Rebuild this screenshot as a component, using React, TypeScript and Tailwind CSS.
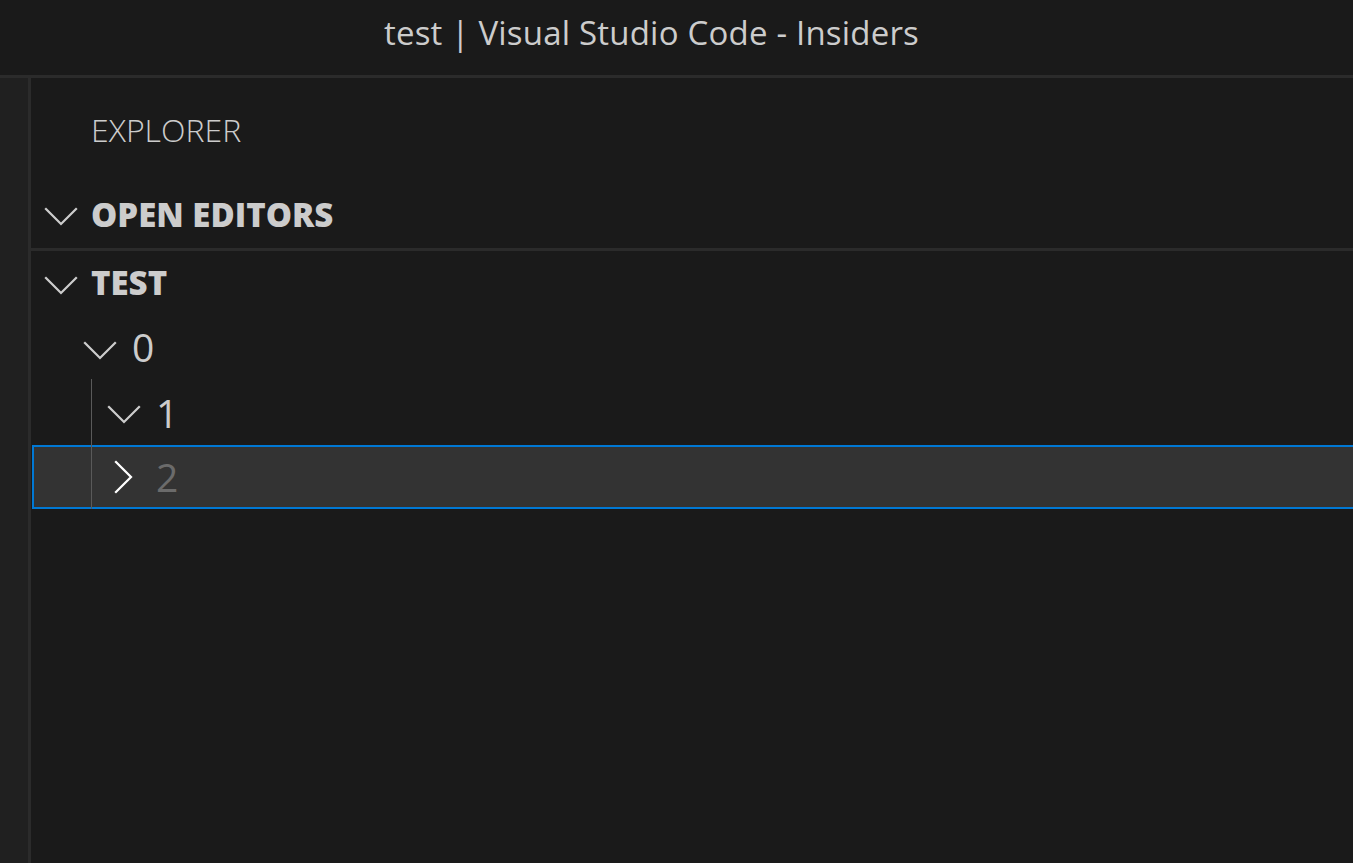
import React from 'react';

const FONT = { fontFamily: '"Open Sans", "Noto Sans", sans-serif' };

const ChevronDown = ({ className = '' }: { className?: string }) => (
  <svg viewBox="0 0 16 16" className={`w-[48px] h-[48px] shrink-0 ${className}`} fill="none">
    <path d="M3 6l5 5 5-5" stroke="currentColor" strokeWidth="0.75" strokeLinecap="square" />
  </svg>
);

const ChevronRight = ({ className = '' }: { className?: string }) => (
  <svg viewBox="0 0 16 16" className={`w-[48px] h-[48px] shrink-0 ${className}`} fill="none">
    <path d="M6 3l5 5-5 5" stroke="currentColor" strokeWidth="0.75" strokeLinecap="square" />
  </svg>
);

const SectionHeader = ({ label, className = '' }: { label: string; className?: string }) => (
  <div className={`flex items-center pl-[6px] text-[#cccccc] ${className}`}>
    <ChevronDown />
    <span className="ml-[6px] text-[33px] font-extrabold leading-none -mt-[2px]">{label}</span>
  </div>
);

export default function App() {
  return (
    <div className="w-[1353px] h-[863px] flex flex-col bg-[#1a1a1a] overflow-hidden" style={FONT}>
      {/* title bar */}
      <div className="h-[78px] shrink-0 flex items-center justify-center pr-[50px] border-b-[3px] border-[#2b2b2b] bg-[#1a1a1a]">
        <span className="text-[33px] text-[#cccccc] -mt-[10px] tracking-[0.2px]">test | Visual Studio Code - Insiders</span>
      </div>

      <div className="flex flex-1 min-h-0">
        {/* activity bar */}
        <div className="w-[31px] shrink-0 bg-[#202020] border-r-[3px] border-[#2b2b2b]" />

        {/* side bar */}
        <div className="flex-1 flex flex-col bg-[#1a1a1a]">
          <div className="h-[104px] flex items-center pl-[60px]">
            <span className="text-[32px] font-light text-[#cccccc] leading-none">EXPLORER</span>
          </div>

          <SectionHeader label="OPEN EDITORS" className="h-[66px]" />
          <div className="h-[3px] bg-[#2b2b2b]" />
          <SectionHeader label="TEST" className="h-[65px]" />

          {/* folder 0 */}
          <div className="h-[65px] flex items-center pl-[45px] text-[#cccccc]">
            <ChevronDown />
            <span className="ml-[8px] text-[39px] leading-none -mt-[4px]">0</span>
          </div>

          {/* folder 1 */}
          <div className="h-[64px] flex items-stretch text-[#cccccc]">
            <div className="w-[60px] shrink-0" />
            <div className="w-px -mt-[2px] bg-[#5a5a5a]" />
            <div className="flex items-center pl-[8px]">
              <ChevronDown />
              <span className="ml-[8px] text-[39px] leading-none -mt-[2px]">1</span>
            </div>
          </div>

          {/* folder 2 (selected) */}
          <div className="h-[64px] ml-px flex items-stretch bg-[#333333] border-y-2 border-l-2 border-[#0078d4]">
            <div className="w-[57px] shrink-0" />
            <div className="w-px -my-[2px] bg-[#5a5a5a]" />
            <div className="flex items-center pl-[6px]">
              <ChevronRight className="text-white" />
              <span className="ml-[10px] text-[39px] leading-none text-[#6b6b6b] -mt-[2px]">2</span>
            </div>
          </div>
        </div>
      </div>
    </div>
  );
}
